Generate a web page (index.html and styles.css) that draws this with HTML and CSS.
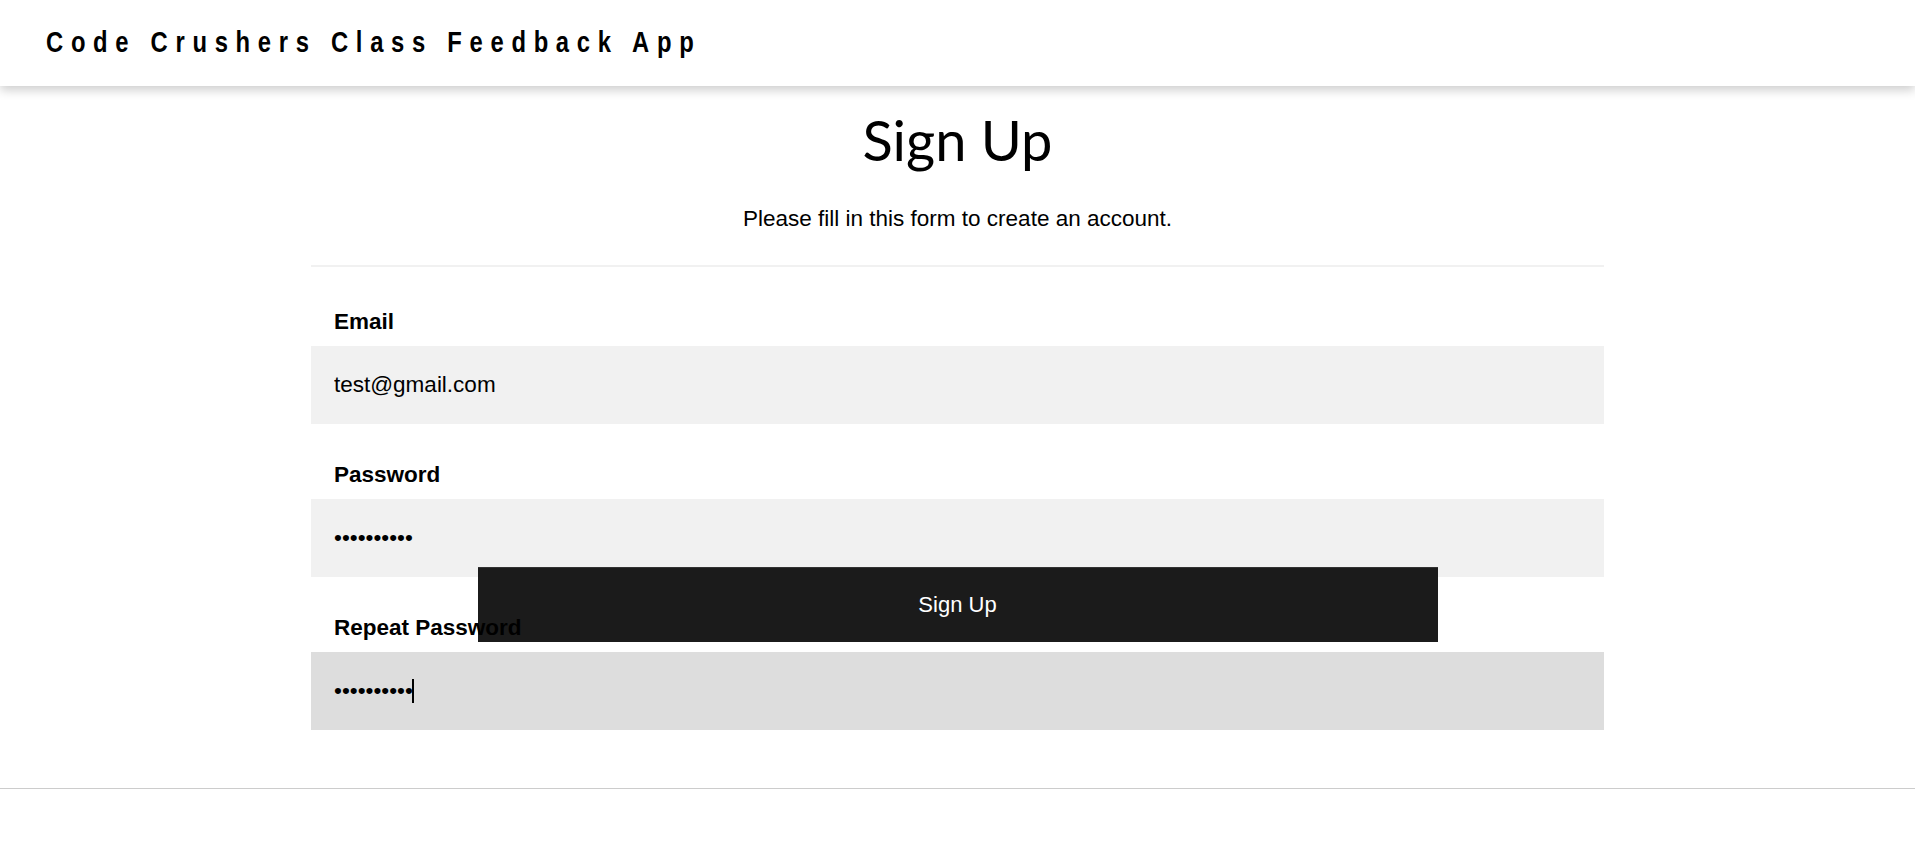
FILE: index.html
```html
<!DOCTYPE html>
<html lang="en">
<head>
<meta charset="utf-8">
<title>Sign Up - Code Crushers Class Feedback App</title>
<link rel="stylesheet" href="styles.css">
</head>
<body>
<header class="topbar">
  <div class="brand">Code Crushers Class Feedback App</div>
</header>
<main class="signup">
  <h1 class="signup-title">Sign Up</h1>
  <p class="signup-lead">Please fill in this form to create an account.</p>
  <hr class="divider">
  <form class="signup-form">
    <label class="field-label" for="email">Email</label>
    <div class="field">
      <input class="field-input" id="email" type="text" value="test@gmail.com">
    </div>
    <label class="field-label" for="psw">Password</label>
    <div class="field">
      <input class="field-input" id="psw" type="password" value="1234567890">
    </div>
    <label class="field-label" for="psw-repeat">Repeat Password</label>
    <div class="field">
      <input class="field-input is-focused" id="psw-repeat" type="password" value="1234567890">
      <span class="caret"></span>
    </div>
    <button class="signup-btn" type="button">Sign Up</button>
  </form>
</main>
<footer class="footer"></footer>
</body>
</html>
```
FILE: styles.css
```css
* { box-sizing: border-box; }

html, body {
  margin: 0;
  padding: 0;
  background: #fff;
  color: #000;
  font-family: "Liberation Sans", Arial, sans-serif;
}

.topbar {
  position: relative;
  z-index: 3;
  height: 86px;
  display: flex;
  align-items: center;
  padding: 0 0 2px 46px;
  background: #fff;
  box-shadow: 0 4px 10px rgba(0, 0, 0, 0.2);
}

.brand {
  display: inline-block;
  white-space: nowrap;
  font-family: "Liberation Sans", Arial, sans-serif;
  font-weight: 700;
  font-size: 29px;
  letter-spacing: 9.4px;
  color: #000;
  transform: scaleX(0.82);
  transform-origin: left center;
}

.signup {
  position: relative;
  width: 1293px;
  margin: 0 auto;
  padding: 20px 0 0;
}

.signup-title {
  margin: 0;
  font-family: Lato, "Open Sans", sans-serif;
  font-weight: 400;
  font-size: 56px;
  line-height: 67px;
  text-align: center;
  color: #000;
}

.signup-lead {
  margin: 33px 0 0;
  font-size: 22.5px;
  line-height: 25px;
  text-align: center;
}

.divider {
  margin: 34px 0 42px;
  height: 0;
  border: 0;
  border-top: 2px solid #f1f1f1;
}

.signup-form {
  display: flex;
  flex-direction: column;
  padding-bottom: 20px;
}

.field-label {
  position: relative;
  z-index: 2;
  display: block;
  align-self: flex-start;
  padding-left: 23px;
  font-weight: 700;
  font-size: 22.5px;
  line-height: 25px;
}

.field {
  position: relative;
  margin: 12px 0 38px;
}

.field-input {
  display: block;
  width: 100%;
  height: 78px;
  margin: 0;
  padding: 0 23px;
  border: 0;
  outline: none;
  background: #f1f1f1;
  font-family: "Liberation Sans", Arial, sans-serif;
  font-size: 22.5px;
  color: #000;
}

.field-input.is-focused {
  background: #dddddd;
}

.caret {
  position: absolute;
  left: 101px;
  top: 27px;
  width: 2px;
  height: 24px;
  background: #000;
}

.signup-btn {
  position: absolute;
  z-index: 1;
  top: 481px;
  left: calc(50% - 480px);
  width: 960px;
  height: 75px;
  margin: 0;
  padding: 0;
  border: 0;
  border-top: 1px solid #333;
  background: #1b1b1b;
  color: #fff;
  font-family: "Liberation Sans", Arial, sans-serif;
  font-size: 22px;
  cursor: pointer;
}

.footer {
  height: 60px;
  border-top: 1px solid #cccccc;
}
```
